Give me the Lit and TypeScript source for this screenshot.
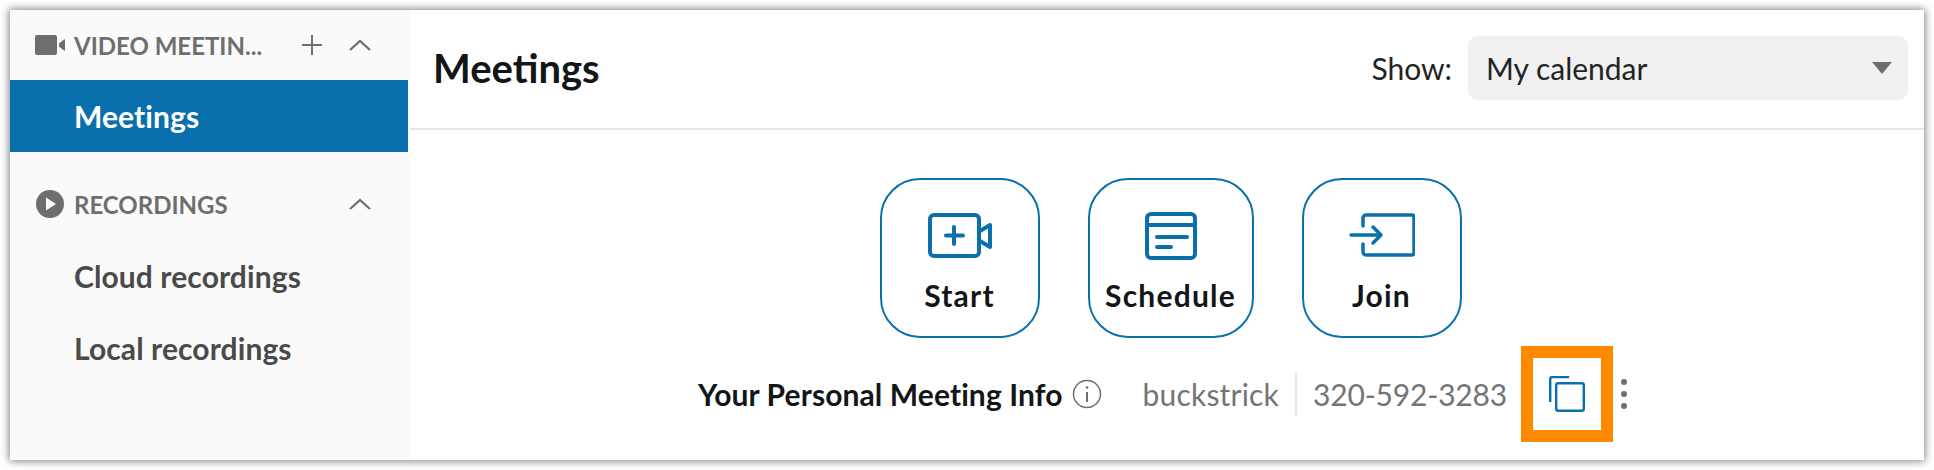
import { LitElement, html, css } from "lit";
import { customElement } from "lit/decorators.js";

@customElement("app-root")
export class AppRoot extends LitElement {
  static styles = css`
    :host { display: block; padding: 10px; background: #fff; font-family: Lato, "Liberation Sans", sans-serif; }
    * { box-sizing: border-box; }
    .frame { display: flex; width: 1914px; height: 450px; background: #fff; box-shadow: 0 0 8px 1px rgba(0,0,0,.5); }
    .side { width: 400px; flex: none; background: #fafafa; padding-right: 2px; }
    .sec { display: flex; align-items: center; color: #6e6e6e; font-size: 24px; font-weight: 700; padding-left: 25px; }
    .sec.a { height: 70px; }
    .sec.b { height: 72px; margin-top: 16px; }
    .sec .ic { width: 30px; flex: none; display: block; }
    .sec .name { margin-left: 9px; flex: 1; white-space: nowrap; }
    .sec .act { flex: none; display: block; }
    .sec .plus { margin-right: 27px; }
    .sec .chev { margin-right: 37px; }
    .item { display: flex; align-items: center; height: 72px; padding-left: 64px; font-size: 30px; font-weight: 700; color: #4a4a4a; letter-spacing: .1px; }
    .item.on { background: #0a70ad; color: #fff; }
    .main { flex: 1; display: flex; flex-direction: column; min-width: 0; }
    .head { display: flex; align-items: center; height: 120px; padding: 0 16px 2px 23px; border-bottom: 2px solid #e6e6e6; flex: none; }
    .head h1 { margin: 0; flex: 1; font-size: 40px; font-weight: 700; color: #131619; }
    .show { font-size: 30px; color: #232323; margin-right: 16px; }
    .select { width: 440px; height: 64px; border-radius: 10px; background: #f1f1f1; display: flex; align-items: center; justify-content: space-between; padding: 0 16px 0 18px; font-size: 30px; color: #232323; }
    .select .tri { width: 0; height: 0; border-left: 10px solid transparent; border-right: 10px solid transparent; border-top: 12px solid #6e6e6e; }
    .btns { display: flex; justify-content: center; gap: 48px; padding: 48px 0 0 7px; }
    .btn { width: 160px; height: 160px; border: 2px solid #0a70ad; border-radius: 40px; display: flex; flex-direction: column; align-items: center; padding-top: 31px; background: #fff; }
    .btn.wide { width: 166px; }
    .btn svg { display: block; height: 50px; }
    .btn span { margin-top: 17px; font-size: 30px; font-weight: 700; color: #131619; letter-spacing: 1.200px; line-height: 34px; }
    .info { display: flex; align-items: center; justify-content: center; height: 96px; margin-top: 8px; padding-right: 9px; }
    .info b { font-size: 30px; font-weight: 700; color: #131619; letter-spacing: .1px; }
    .info .i { margin-left: 9px; display: block; }
    .muted { font-size: 30px; color: #747474; }
    .user { margin-left: 41px; letter-spacing: .2px; }
    .phone { letter-spacing: -.2px; }
    .div { width: 2px; height: 44px; background: #e6e6e6; margin: 0 16px 0 16px; }
    .copy { width: 92px; height: 96px; border: 12px solid #ff8a00; margin-left: 14px; display: flex; align-items: center; justify-content: center; background: #fff; }
    .copy svg { display: block; }
    .dots { margin-left: 8px; display: flex; flex-direction: column; gap: 6px; }
    .dots i { display: block; width: 6px; height: 6px; border-radius: 50%; background: #6e6e6e; }
  `;

  render() {
    const chev = html`<svg class="act chev" width="22" height="12" viewBox="0 0 22 12" fill="none" stroke="#6e6e6e" stroke-width="2.2"><path d="M1 11 11 2l10 9"/></svg>`;
    return html`
      <div class="frame">
        <aside class="side">
          <div class="sec a">
            <svg class="ic" width="30" height="20" viewBox="0 0 30 20" fill="#6e6e6e"><rect width="22" height="20" rx="2"/><path d="M24 8.5 29 4.5c.5-.4 1-.1 1 .5v10c0 .6-.5.9-1 .5l-5-4z"/></svg>
            <span class="name">VIDEO MEETIN...</span>
            <svg class="act plus" width="20" height="20" viewBox="0 0 20 20" stroke="#6e6e6e" stroke-width="2"><path d="M10 0v20M0 10h20"/></svg>
            ${chev}
          </div>
          <div class="item on">Meetings</div>
          <div class="sec b">
            <svg class="ic" width="30" height="28" viewBox="0 0 30 28"><circle cx="15" cy="14" r="14" fill="#6e6e6e"/><path d="M11 7.5 21 14l-10 6.5z" fill="#fafafa"/></svg>
            <span class="name">RECORDINGS</span>
            ${chev}
          </div>
          <div class="item">Cloud recordings</div>
          <div class="item">Local recordings</div>
        </aside>
        <section class="main">
          <header class="head">
            <h1>Meetings</h1>
            <span class="show">Show:</span>
            <div class="select"><span>My calendar</span><span class="tri"></span></div>
          </header>
          <div class="btns">
            <div class="btn">
              <svg width="64" height="50" viewBox="0 0 64 50" fill="none" stroke="#0a70ad" stroke-width="4" stroke-linejoin="round" stroke-linecap="round">
                <rect x="2" y="4" width="49" height="41" rx="4"/><path d="M52 20l10-6v22l-10-6"/><path d="M26 16v17M18 24.500h17"/>
              </svg>
              <span>Start</span>
            </div>
            <div class="btn wide">
              <svg width="52" height="50" viewBox="0 0 52 50" fill="none" stroke="#0a70ad" stroke-width="4" stroke-linecap="round">
                <rect x="2" y="3" width="48" height="44" rx="4"/><path d="M2 14h48" stroke-linecap="butt"/><path d="M12 26h30M12 36h14"/>
              </svg>
              <span>Schedule</span>
            </div>
            <div class="btn">
              <svg width="66" height="50" viewBox="0 0 66 50" fill="none" stroke="#0a70ad" stroke-width="3.500" stroke-linecap="round" stroke-linejoin="round">
                <path d="M14 15V7a3 3 0 0 1 3-3h46a2 2 0 0 1 2 2v36a2 2 0 0 1-2 2H17a3 3 0 0 1-3-3v-8"/><path d="M2 24h30M24 16l8 8-8 8"/>
              </svg>
              <span>Join</span>
            </div>
          </div>
          <div class="info">
            <b>Your Personal Meeting Info</b>
            <svg class="i" width="30" height="30" viewBox="0 0 30 30" fill="none" stroke="#6e6e6e" stroke-width="1.500"><circle cx="15" cy="15" r="13.5"/><path d="M15 13v10" stroke-width="2"/><circle cx="15" cy="8.500" r="1.300" fill="#6e6e6e" stroke="none"/></svg>
            <span class="muted user">buckstrick</span>
            <span class="div"></span>
            <span class="muted phone">320-592-3283</span>
            <div class="copy">
              <svg width="36" height="36" viewBox="0 0 36 36" fill="none" stroke="#0a70ad" stroke-width="2.400"><path d="M1.200 26V3a2 2 0 0 1 2-2h17"/><rect x="7.200" y="7.200" width="27.600" height="27.600" rx="2"/></svg>
            </div>
            <div class="dots"><i></i><i></i><i></i></div>
          </div>
        </section>
      </div>
    `;
  }
}
